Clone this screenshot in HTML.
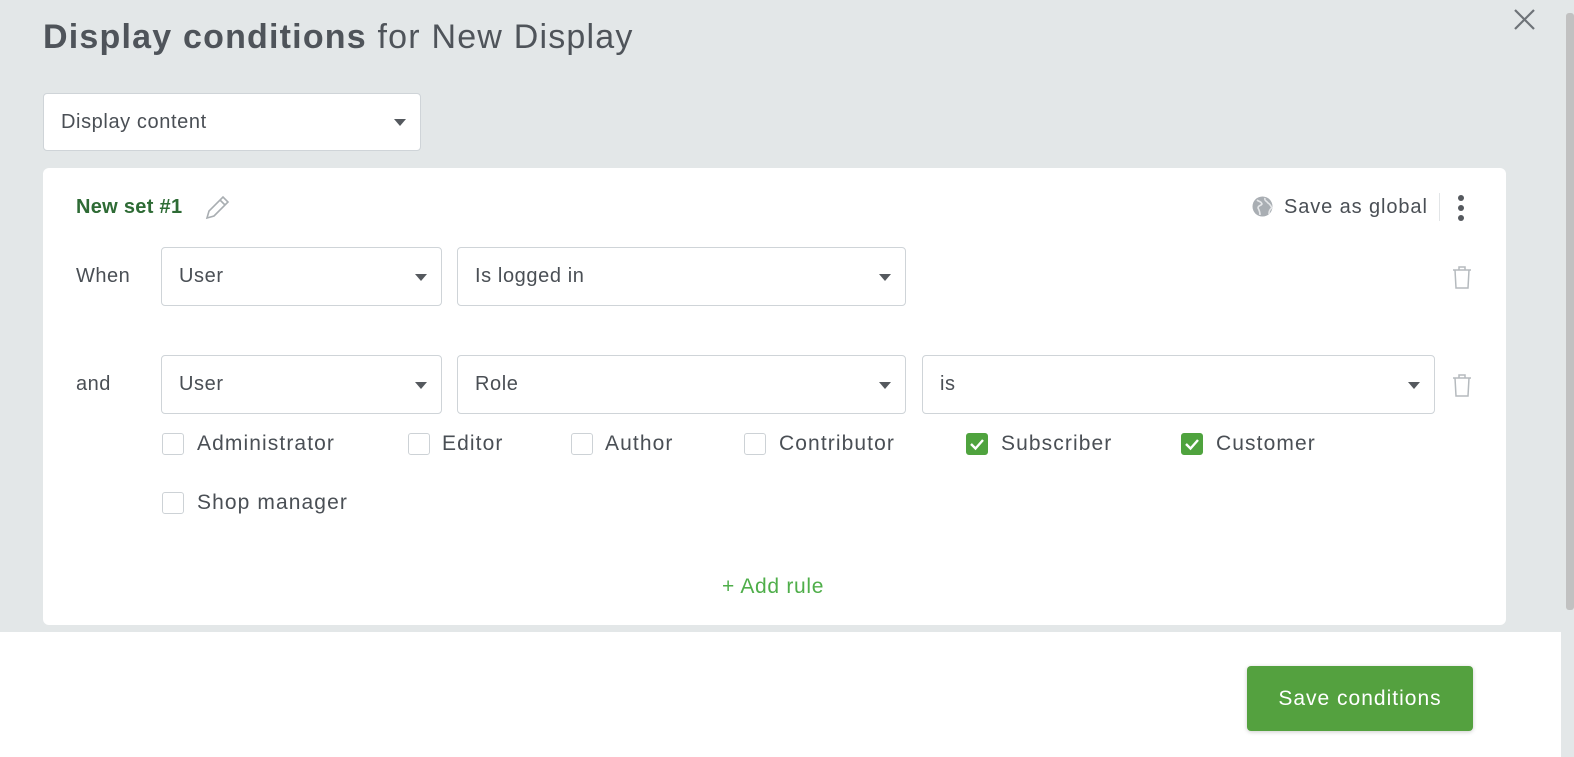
<!DOCTYPE html><html><head><style>
*{box-sizing:border-box;margin:0;padding:0}
body{width:1574px;height:757px;background:#e3e7e8;font-family:"Liberation Sans",sans-serif;color:#4a4f55;position:relative;overflow:hidden}
.a{position:absolute}
.sel{position:absolute;background:#fff;border:1px solid #cfd4d8;border-radius:4px;font-size:20px;letter-spacing:0.6px;color:#4a4f55;padding-left:17px;display:flex;align-items:center}
.sel:after{content:"";position:absolute;right:14px;top:50%;margin-top:-3px;border-left:6px solid transparent;border-right:6px solid transparent;border-top:7px solid #55595e}
.cb{position:absolute;width:22px;height:22px;border:1px solid #cdd2d6;border-radius:3px;background:#fff}
.cb.on{background:#4fa33e;border-color:#4fa33e}
.lb{position:absolute;font-size:21px;letter-spacing:1.1px;color:#4a4f55}
</style></head><body>
<div class="a" style="left:43px;top:18px;font-size:34px;letter-spacing:1.2px;color:#4f545a"><b>Display conditions</b> for New Display</div>
<svg class="a" style="left:1513px;top:8px" width="23" height="23"><path d="M2 2L21 21M21 2L2 21" stroke="#6e7378" stroke-width="2.2"/></svg>
<div class="a" style="left:1566px;top:13px;width:8px;height:597px;background:#c1c1c1;border-radius:3px"></div>
<div class="sel" style="left:43px;top:93px;width:378px;height:58px">Display content</div>
<div class="a" style="left:43px;top:168px;width:1463px;height:457px;background:#fff;border-radius:6px"></div>
<div class="a" style="left:76px;top:196px;font-size:20px;font-weight:bold;color:#2e6b35;letter-spacing:0.3px">New set #1</div>
<svg class="a" style="left:203px;top:194px" width="28" height="28"><path d="M4 24L6 17L20 3L25 8L11 22Z M17 6L22 11" stroke="#a9aeb2" stroke-width="1.6" fill="none"/></svg>
<svg class="a" style="left:1252px;top:196px" width="21" height="21"><circle cx="10.5" cy="10.5" r="10" fill="#a9aeb3"/><path d="M5 4c2 2 4 1 5 4c-1 2-4 1-4 4c1 2 2 3 2 7M13 2c-1 3 2 3 3 5c2 1 3 3 4 5c-2 1-3 3-3 6" stroke="#e5e7e9" stroke-width="1.6" fill="none"/></svg>
<div class="a" style="left:1284px;top:196px;font-size:20px;letter-spacing:0.9px;color:#4a4f55">Save as global</div>
<div class="a" style="left:1439px;top:193px;width:1px;height:28px;background:#e2e5e7"></div>
<svg class="a" style="left:1456px;top:194px" width="10" height="28"><circle cx="5" cy="4" r="3" fill="#55595e"/><circle cx="5" cy="14" r="3" fill="#55595e"/><circle cx="5" cy="24" r="3" fill="#55595e"/></svg>
<div class="lb" style="left:76px;top:265px;font-size:20px;letter-spacing:0.5px">When</div>
<div class="sel" style="left:161px;top:247px;width:281px;height:59px">User</div>
<div class="sel" style="left:457px;top:247px;width:449px;height:59px">Is logged in</div>
<svg class="a" style="left:1451px;top:265px" width="22" height="25"><path d="M2 5H20M8 5V2H14V5M4 5L5 23H17L18 5" stroke="#b5babe" stroke-width="1.5" fill="none"/></svg>
<div class="lb" style="left:76px;top:373px;font-size:20px;letter-spacing:0.5px">and</div>
<div class="sel" style="left:161px;top:355px;width:281px;height:59px">User</div>
<div class="sel" style="left:457px;top:355px;width:449px;height:59px">Role</div>
<div class="sel" style="left:922px;top:355px;width:513px;height:59px">is</div>
<svg class="a" style="left:1451px;top:373px" width="22" height="25"><path d="M2 5H20M8 5V2H14V5M4 5L5 23H17L18 5" stroke="#b5babe" stroke-width="1.5" fill="none"/></svg>
<div class="cb" style="left:162px;top:433px"></div><div class="lb" style="left:197px;top:432px">Administrator</div>
<div class="cb" style="left:408px;top:433px"></div><div class="lb" style="left:442px;top:432px">Editor</div>
<div class="cb" style="left:571px;top:433px"></div><div class="lb" style="left:605px;top:432px">Author</div>
<div class="cb" style="left:744px;top:433px"></div><div class="lb" style="left:779px;top:432px">Contributor</div>
<div class="cb on" style="left:966px;top:433px"><svg width="20" height="20"><path d="M4 10L8.5 14.5L16 6" stroke="#fff" stroke-width="2.4" fill="none"/></svg></div><div class="lb" style="left:1001px;top:432px">Subscriber</div>
<div class="cb on" style="left:1181px;top:433px"><svg width="20" height="20"><path d="M4 10L8.5 14.5L16 6" stroke="#fff" stroke-width="2.4" fill="none"/></svg></div><div class="lb" style="left:1216px;top:432px">Customer</div>
<div class="cb" style="left:162px;top:492px"></div><div class="lb" style="left:197px;top:491px">Shop manager</div>
<div class="a" style="left:722px;top:575px;font-size:21px;letter-spacing:0.7px;color:#4fae4a">+ Add rule</div>
<div class="a" style="left:0;top:632px;width:1561px;height:125px;background:#fff"></div>
<div class="a" style="left:1247px;top:666px;width:226px;height:65px;background:#54a13f;border-radius:4px;box-shadow:0 1px 4px rgba(0,0,0,.2);color:#fff;font-size:21px;letter-spacing:1px;display:flex;align-items:center;justify-content:center">Save conditions</div>
</body></html>
